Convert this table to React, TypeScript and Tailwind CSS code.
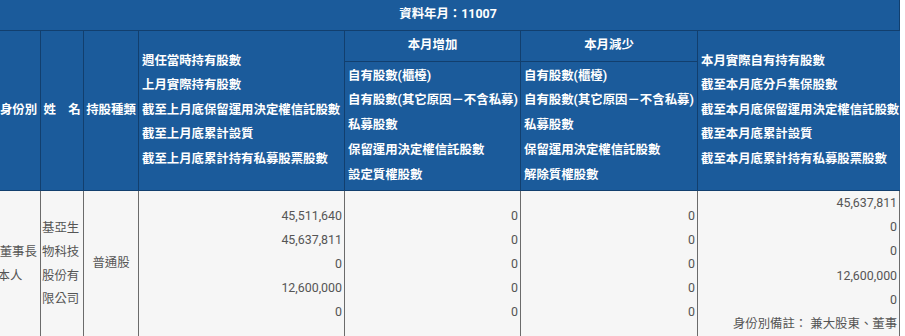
import React from "react";

const font = { fontFamily: 'Roboto, "Noto Sans CJK TC", sans-serif' };

export default function App() {
  const hb = "border border-[#123f6e]";
  const bb = "border border-[#6b6b6b]";
  return (
    <div className="w-[905px] h-[336px] overflow-hidden bg-white" style={font}>
      <table className="-ml-[4px] w-[903px] table-fixed border-collapse text-[12.4px]">
        <colgroup>
          <col className="w-[44px]" />
          <col className="w-[43px]" />
          <col className="w-[55px]" />
          <col className="w-[206px]" />
          <col className="w-[176px]" />
          <col className="w-[177px]" />
          <col className="w-[202px]" />
        </colgroup>
        <thead className="bg-[#1b5b9b] text-white font-bold">
          <tr className="h-[30px]">
            <th colSpan={7} className={`${hb} border-t-0 text-center font-bold`}>
              資料年月：11007
            </th>
          </tr>
          <tr className="h-[31px]">
            <th rowSpan={2} className={`${hb} text-center font-bold px-0`}>身份別</th>
            <th rowSpan={2} className={`${hb} text-center font-bold px-0`}>姓　名</th>
            <th rowSpan={2} className={`${hb} text-center font-bold px-0 whitespace-nowrap`}>持股種類</th>
            <th rowSpan={2} className={`${hb} text-left font-bold pl-[3px] leading-[24.5px] whitespace-nowrap`}>
              <div>週任當時持有股數</div>
              <div>上月實際持有股數</div>
              <div>截至上月底保留運用決定權信託股數</div>
              <div>截至上月底累計設質</div>
              <div>截至上月底累計持有私募股票股數</div>
            </th>
            <th className={`${hb} text-center font-bold`}>本月增加</th>
            <th className={`${hb} text-center font-bold`}>本月減少</th>
            <th rowSpan={2} className={`${hb} border-r-0 text-left font-bold pl-[3px] leading-[24.5px] whitespace-nowrap`}>
              <div>本月實際自有持有股數</div>
              <div>截至本月底分戶集保股數</div>
              <div>截至本月底保留運用決定權信託股數</div>
              <div>截至本月底累計設質</div>
              <div>截至本月底累計持有私募股票股數</div>
            </th>
          </tr>
          <tr className="h-[129px]">
            <th className={`${hb} text-left font-bold pl-[3px] leading-[24.8px] whitespace-nowrap`}>
              <div>自有股數(櫃檯)</div>
              <div>自有股數(其它原因－不含私募)</div>
              <div>私募股數</div>
              <div>保留運用決定權信託股數</div>
              <div>設定質權股數</div>
            </th>
            <th className={`${hb} text-left font-bold pl-[3px] leading-[24.8px] whitespace-nowrap`}>
              <div>自有股數(櫃檯)</div>
              <div>自有股數(其它原因－不含私募)</div>
              <div>私募股數</div>
              <div>保留運用決定權信託股數</div>
              <div>解除質權股數</div>
            </th>
          </tr>
        </thead>
        <tbody className="bg-[#f6f6f6] text-[#555555]">
          <tr className="h-[147px]">
            <td className={`${bb} border-l-0 text-center leading-[23.5px] px-0`}>
              <div>董事長</div>
              <div className="text-left pl-[1px]">本人</div>
            </td>
            <td className={`${bb} text-left pl-[1px] leading-[23.8px]`}>
              <div>基亞生</div>
              <div>物科技</div>
              <div>股份有</div>
              <div>限公司</div>
            </td>
            <td className={`${bb} text-center`}>普通股</td>
            <td className={`${bb} text-right pr-[2px] leading-[24px]`}>
              <div>45,511,640</div>
              <div>45,637,811</div>
              <div>0</div>
              <div>12,600,000</div>
              <div>0</div>
            </td>
            <td className={`${bb} text-right pr-[2px] leading-[24px]`}>
              <div>0</div>
              <div>0</div>
              <div>0</div>
              <div>0</div>
              <div>0</div>
            </td>
            <td className={`${bb} text-right pr-[2px] leading-[24px]`}>
              <div>0</div>
              <div>0</div>
              <div>0</div>
              <div>0</div>
              <div>0</div>
            </td>
            <td className={`${bb} text-right pr-[2px] leading-[24.2px] whitespace-nowrap`}>
              <div>45,637,811</div>
              <div>0</div>
              <div>0</div>
              <div>12,600,000</div>
              <div>0</div>
              <div>身份別備註： 兼大股東、董事</div>
            </td>
          </tr>
        </tbody>
      </table>
    </div>
  );
}
